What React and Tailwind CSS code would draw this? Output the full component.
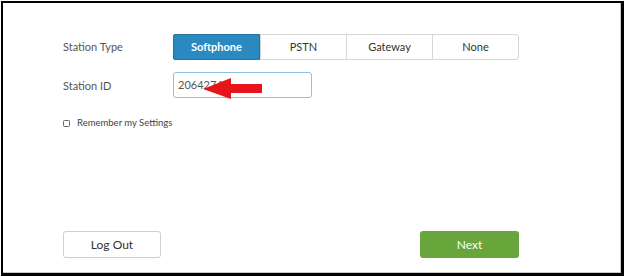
import React from "react";

export default function App() {
  const segs = ["Softphone", "PSTN", "Gateway", "None"];
  return (
    <div className="w-[624px] h-[276px] bg-white pl-[1px] pt-[1px]" style={{ fontFamily: "Lato, 'Liberation Sans', sans-serif" }}>
      <div className="w-[623px] h-[275px] border-l-2 border-t-2 border-r-[3px] border-b-[3px] border-black">
        <div className="w-full h-full flex flex-col pl-[60px] pt-[31px] pb-[14px] border-b border-r border-[#c8c8c8]">
          <div className="flex items-center h-[26px]">
            <div className="w-[110px] text-[11px] text-[#555]">Station Type</div>
            <div className="flex w-[346px] h-[26px] rounded-[3px] border border-[#d6d6d6]">
              {segs.map((s, i) => (
                <div
                  key={s}
                  className={
                    i === 0
                      ? "flex-1 flex items-center justify-center bg-[#2a89c1] text-white font-bold text-[11px] rounded-l-[2px] -m-[1px] mr-0 border border-[#22719f]"
                      : "flex-1 flex items-center justify-center text-[11px] text-[#333] border-l border-[#d6d6d6]"
                  }
                >
                  {s}
                </div>
              ))}
            </div>
          </div>
          <div className="flex items-center h-[26px] mt-[12px]">
            <div className="w-[110px] text-[11px] text-[#555] pt-[2px]">Station ID</div>
            <div className="relative w-[139px] h-[26px] rounded-[3px] border border-[#8fc1e6] flex items-center pl-[4px] text-[11px] text-[#555]">
              2064274
              <svg className="absolute left-0 top-0" width="139" height="26" viewBox="0 0 139 26">
                <polygon points="29,16 57,5 57,11 88,11 88,20 57,20 57,26" fill="#e8141c" />
              </svg>
            </div>
          </div>
          <div className="flex items-center mt-[20px] h-[10px]">
            <div className="w-[7px] h-[7px] rounded-[1.5px] border border-[#666]" />
            <div className="ml-[7px] text-[9.5px] text-[#444]">Remember my Settings</div>
          </div>
          <div className="mt-auto flex justify-between w-[456px]">
            <div className="w-[98px] h-[27px] rounded-[3px] border border-[#d0d0d0] flex items-center justify-center text-[12px] text-[#333]">
              Log Out
            </div>
            <div className="w-[99px] h-[27px] rounded-[3px] bg-[#68a63c] flex items-center justify-center text-[12px] text-white">
              Next
            </div>
          </div>
        </div>
      </div>
    </div>
  );
}
